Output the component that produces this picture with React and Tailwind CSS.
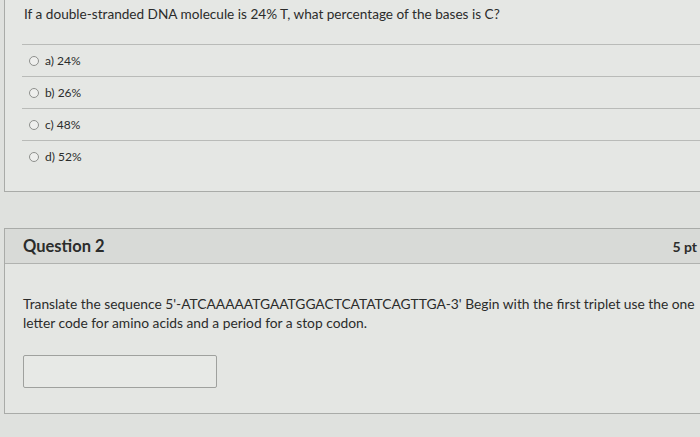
import React from 'react';

const options = ['a) 24%', 'b) 26%', 'c) 48%', 'd) 52%'];

const App = () => {
  return (
    <div
      className="w-[700px] h-[437px] overflow-hidden bg-[#dfe1de] text-[#2b2c2b]"
      style={{ fontFamily: 'Lato, "Open Sans", sans-serif' }}
    >
      {/* Question 1 */}
      <div className="mt-[-12px] ml-[4px] mr-[-12px] h-[204px] border border-[#a9aba8] bg-[#e5e7e4]">
        <p className="pl-[19px] pt-[16px] text-[13.6px] leading-[18px]">
          If a double-stranded DNA molecule is 24% T, what percentage of the bases is C?
        </p>
        <ul className="mt-[21px] ml-[17px]">
          {options.map((opt) => (
            <li key={opt} className="flex items-center h-[32px] border-t border-[#b9bbb8]">
              <span className="ml-[7px] w-[10px] h-[10px] rounded-full border border-[#8e908d] bg-[#eeefed]"></span>
              <span className="ml-[6px] text-[12px]">{opt}</span>
            </li>
          ))}
        </ul>
      </div>

      {/* Question 2 */}
      <div className="mt-[36px] ml-[4px] mr-[-12px] h-[186px] border border-[#a9aba8] bg-[#e4e6e3]">
        <div className="flex items-center justify-between h-[35px] pl-[18px] pr-[14px] bg-[#d8dad7] border-b border-[#b0b2af]">
          <span className="text-[16.5px] font-bold">Question 2</span>
          <span className="text-[14px] font-bold">5 pt</span>
        </div>
        <div className="pl-[18px] pt-[30px]">
          <p className="text-[13.8px] leading-[19px] whitespace-nowrap">
            Translate the sequence 5'-ATCAAAAATGAATGGACTCATATCAGTTGA-3' Begin with the first triplet use the one
            <br />
            letter code for amino acids and a period for a stop codon.
          </p>
          <div className="mt-[23px] w-[194px] h-[33px] border border-[#9fa19e] rounded-[2px] bg-[#e7e9e6]"></div>
        </div>
      </div>
    </div>
  );
};

export default App;
